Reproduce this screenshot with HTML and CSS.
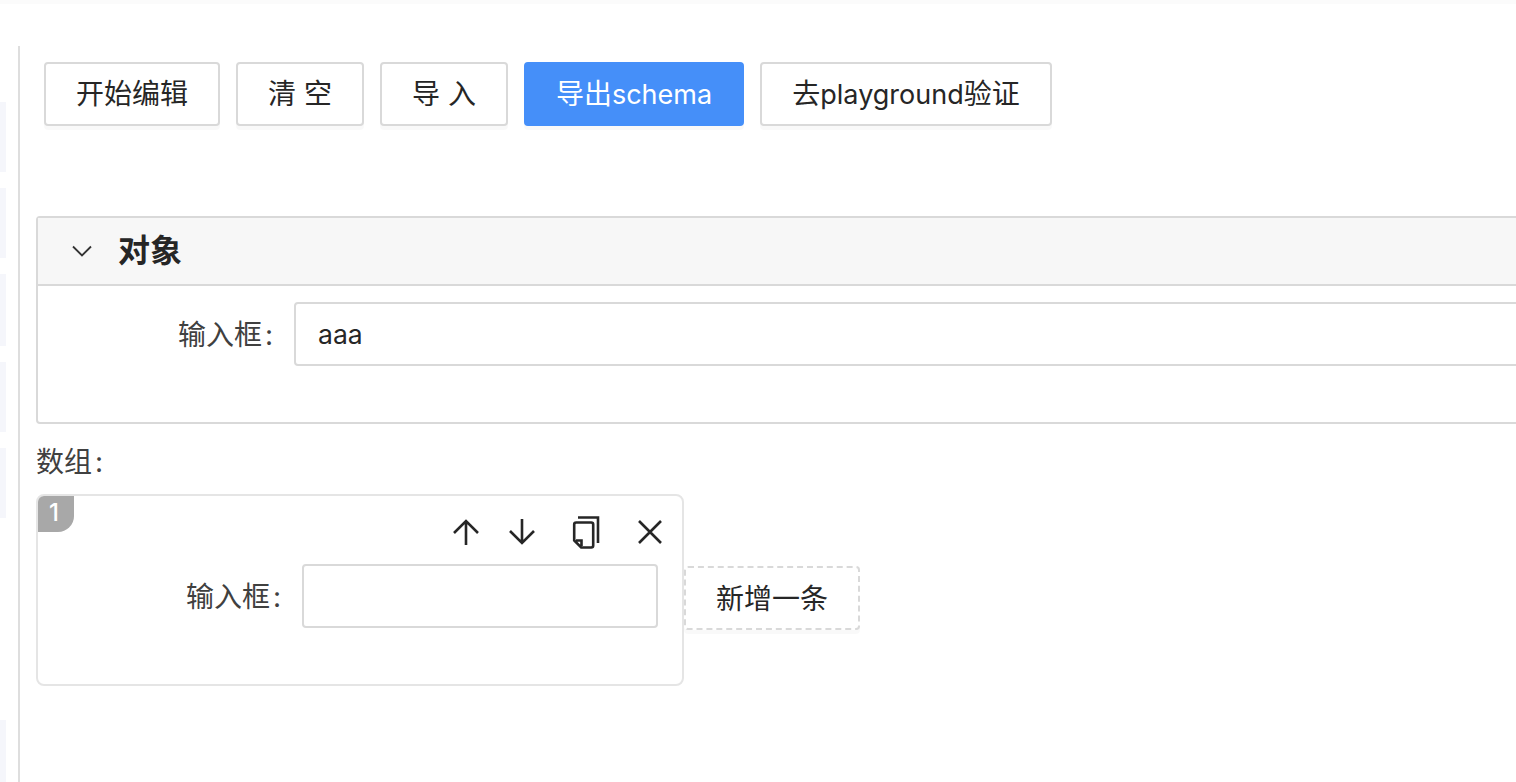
FILE: index.html
```html
<!DOCTYPE html>
<html lang="en">
<head>
    <meta charset="UTF-8">
    <title>Form Editor</title>
    <link rel="stylesheet" href="styles.css">
</head>
<body>
    <div class="top-strip"></div>
    <div class="page">
        <div class="sidebar">
            <div class="side-item"></div>
            <div class="side-item"></div>
            <div class="side-item tall"></div>
            <div class="side-item"></div>
            <div class="side-item"></div>
            <div class="side-item last"></div>
        </div>
        <div class="main">
            <div class="toolbar">
                <button class="btn btn-edit">开始编辑</button>
                <button class="btn btn-short">清 空</button>
                <button class="btn btn-short">导 入</button>
                <button class="btn btn-primary">导出<span class="latin">schema</span></button>
                <button class="btn btn-play">去<span class="latin">playground</span>验证</button>
            </div>

            <div class="panel">
                <div class="panel-header">
                    <svg class="chevron" width="20" height="12" viewBox="0 0 20 12">
                        <path d="M1 1.500l9 9 9-9" fill="none" stroke="#333" stroke-width="1.800"/>
                    </svg>
                    <span class="panel-title">对象</span>
                </div>
                <div class="panel-body">
                    <div class="form-row">
                        <label class="form-label">输入框<span class="colon">:</span></label>
                        <input class="form-input wide" type="text" value="aaa">
                    </div>
                </div>
            </div>

            <div class="list-label">数组<span class="colon">:</span></div>
            <div class="list-row">
                <div class="list-card">
                    <div class="badge">1</div>
                    <div class="card-tools">
                        <svg class="tool" width="28" height="28" viewBox="0 0 28 28">
                            <path d="M14 27V3M2 15L14 3l12 12" fill="none" stroke="#262626" stroke-width="2.600"/>
                        </svg>
                        <svg class="tool" width="28" height="28" viewBox="0 0 28 28">
                            <path d="M14 1v24M2 13l12 12 12-12" fill="none" stroke="#262626" stroke-width="2.600"/>
                        </svg>
                        <svg class="tool tool-copy" width="28" height="33" viewBox="0 0 28 33">
                            <path d="M6 1.500h20V27" fill="none" stroke="#262626" stroke-width="2.600"/>
                            <path d="M2.200 8.500V24.500l7 7h10a2 2 0 0 0 2-2V8.500a2 2 0 0 0-2-2H4.200a2 2 0 0 0-2 2zM4 24.500h5.500V30" fill="none" stroke="#262626" stroke-width="2.600"/>
                        </svg>
                        <svg class="tool" width="26" height="26" viewBox="0 0 26 26">
                            <path d="M2 2l22 22M24 2L2 24" fill="none" stroke="#262626" stroke-width="2.600"/>
                        </svg>
                    </div>
                    <div class="form-row card-form">
                        <label class="form-label">输入框<span class="colon">:</span></label>
                        <input class="form-input" type="text">
                    </div>
                </div>
                <button class="btn btn-dashed">新增一条</button>
            </div>
        </div>
    </div>
</body>
</html>
```

FILE: styles.css
```css
html, body {
    margin: 0;
    padding: 0;
    height: 100%;
    overflow: hidden;
    background-color: #ffffff;
}

body {
    font-family: "Inter", "Noto Sans CJK SC", sans-serif;
    font-size: 28px;
    color: #262626;
}

.top-strip {
    height: 4px;
    background-color: #fbfbfb;
}

.page {
    display: flex;
    height: 778px;
}

/* what is left of the side menu */
.sidebar {
    width: 6px;
    flex-shrink: 0;
    padding-top: 98px;
}

.side-item {
    height: 70px;
    margin-bottom: 16px;
    background-color: #f5f6fb;
}

.side-item.tall {
    height: 72px;
}

.side-item.last {
    margin-top: 202px;
    height: 62px;
}

.main {
    flex: 1;
    min-width: 0;
    margin-top: 42px;
    margin-left: 12px;
    padding-left: 16px;
    border-left: 2px solid #dedede;
}

.toolbar {
    display: flex;
    gap: 16px;
    padding: 16px 0 0 8px;
}

.btn {
    height: 64px;
    padding: 0 0 4px;
    font-family: inherit;
    font-size: 28px;
    color: #262626;
    background-color: #ffffff;
    border: 2px solid #d9d9d9;
    border-radius: 4px;
    box-shadow: 0 4px 0 rgba(0, 0, 0, 0.025);
}

.latin {
    font-size: 27px;
}

.btn-edit {
    width: 176px;
}

.btn-short {
    width: 128px;
}

.btn-play {
    width: 292px;
}

.btn-primary {
    width: 220px;
    color: #ffffff;
    background-color: #458ff9;
    border-color: #458ff9;
}

.btn-dashed {
    width: 176px;
    margin-top: 72px;
    flex-shrink: 0;
    padding-bottom: 2px;
    border: 2px dashed #d9d9d9;
}

.panel {
    width: 1600px;
    height: 208px;
    box-sizing: border-box;
    margin-top: 90px;
    border: 2px solid #d9d9d9;
    border-radius: 4px;
}

.panel-header {
    display: flex;
    align-items: center;
    height: 68px;
    box-sizing: border-box;
    padding-left: 34px;
    background-color: #f7f7f7;
    border-bottom: 2px solid #d9d9d9;
}

.panel-title {
    margin-left: 26px;
    padding-bottom: 6px;
    font-size: 32px;
    font-weight: 700;
}

.panel-body {
    padding: 16px 0 0;
}

.form-row {
    display: flex;
    align-items: center;
}

.form-label {
    width: 256px;
    flex-shrink: 0;
    padding-bottom: 2px;
    text-align: right;
    color: #404040;
}

.colon {
    margin-left: 3px;
}

.form-label .colon {
    margin-right: 21px;
}

.form-input {
    height: 64px;
    width: 356px;
    box-sizing: border-box;
    padding: 0 22px;
    font-family: inherit;
    font-size: 26.500px;
    color: #262626;
    background-color: #ffffff;
    border: 2px solid #d9d9d9;
    border-radius: 4px;
    outline: none;
}

.form-input.wide {
    width: 1300px;
}

.list-label {
    margin-top: 18px;
    line-height: 40px;
    color: #404040;
}

.list-row {
    display: flex;
    margin-top: 12px;
}

.list-card {
    position: relative;
    width: 648px;
    height: 192px;
    box-sizing: border-box;
    flex-shrink: 0;
    border: 2px solid #e5e5e5;
    border-radius: 8px;
}

.badge {
    position: absolute;
    top: 0;
    left: 0;
    width: 36px;
    height: 36px;
    box-sizing: border-box;
    padding-right: 4px;
    line-height: 34px;
    text-align: center;
    font-size: 24px;
    font-weight: 500;
    color: #ffffff;
    background-color: #a8a8a8;
    border-radius: 6px 0 16px 0;
}

.card-tools {
    display: flex;
    align-items: center;
    justify-content: flex-end;
    gap: 28px;
    height: 36px;
    padding: 18px 19px 0 0;
}

.tool {
    flex-shrink: 0;
}

.tool-copy {
    margin: 0 9px 0 8px;
}

.card-form {
    margin-top: 14px;
}

.card-form .form-label {
    width: 264px;
}
```
